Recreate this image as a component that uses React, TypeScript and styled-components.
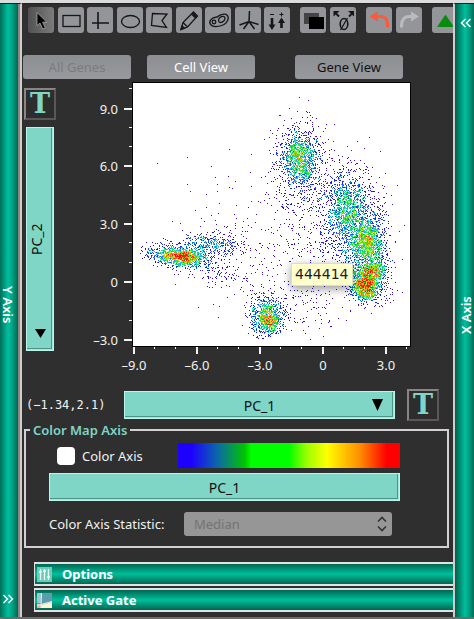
import React, { ReactNode } from "react";
import styled, { createGlobalStyle } from "styled-components";

const GlobalStyle = createGlobalStyle`
  * {
    box-sizing: border-box;
  }

  body {
    margin: 0;
    background: #2f2f2f;
    font-family: "Noto Sans", "Open Sans", sans-serif;
    font-size: 13px;
    color: #f2f2f2;
  }

  button,
  select {
    font-family: inherit;
    font-size: 13px;
    padding: 0;
    margin: 0;
  }
`;

const StyledWindow = styled.div`
  display: flex;
  min-height: 100vh;
  border-top: 3px solid #dcdcdc;
  border-bottom: 2px solid #6c6c6c;
  background: #2f2f2f;
`;

const StyledRail = styled.button<{ $side: "left" | "right" }>`
  flex: none;
  display: flex;
  flex-direction: ${({ $side }) =>
    $side === "left" ? "column" : "column-reverse"};
  align-items: center;
  width: ${({ $side }) => ($side === "left" ? "22px" : "21px")};
  padding: ${({ $side }) =>
    $side === "left" ? "12px 4px 13px 0" : "14px 0 14px 2px"};
  border: 0 solid #d2cccc;
  border-top: 1px solid #222;
  border-right-width: ${({ $side }) => ($side === "left" ? "2px" : "0")};
  border-left-width: ${({ $side }) => ($side === "left" ? "0" : "2px")};
  background: ${({ $side }) =>
    $side === "left"
      ? "linear-gradient(90deg, #006f59 0, #00826a 2px, #00bf9c 8px, #00a587 12px, #00654f 18px, #8b8585 18px)"
      : "linear-gradient(90deg, #00604e 0, #00bf9c 10px, #00a184 14px, #006a55 19px)"};
  color: #fff;
  cursor: pointer;
`;

const StyledRailLabel = styled.span<{ $up?: boolean }>`
  flex: 1;
  display: flex;
  align-items: center;
  justify-content: center;
  writing-mode: vertical-rl;
  transform: ${({ $up }) => ($up ? "rotate(180deg)" : "none")};
  font-size: 13px;
  font-weight: 600;
  line-height: 16px;
`;

const StyledMain = styled.main`
  flex: 1;
  min-width: 0;
  display: flex;
  flex-direction: column;
  border-top: 1px solid #222;
`;

const StyledToolbar = styled.div`
  display: flex;
  gap: 10px;
  height: 29px;
  padding: 3px 0 0 6px;
  overflow: hidden;
`;

const StyledToolGroup = styled.div<{ $width: number }>`
  flex: none;
  display: flex;
  justify-content: space-between;
  width: ${({ $width }) => $width}px;
`;

const StyledTool = styled.button<{ $active?: boolean }>`
  flex: none;
  width: 26px;
  height: 26px;
  border: 0;
  border-radius: 3px;
  background: ${({ $active }) =>
    $active ? "linear-gradient(90deg, #515151, #7c7c7c)" : "#949599"};

  svg {
    display: block;
  }
`;

const StyledViews = styled.div`
  display: flex;
  justify-content: space-between;
  gap: 16px;
  padding: 22px 50px 2px 1px;
`;

const StyledViewPair = styled.div`
  display: flex;
  gap: 16px;
`;

const StyledViewButton = styled.button<{ $color: string }>`
  width: 108px;
  height: 24px;
  border: 0;
  border-radius: 3px;
  background: linear-gradient(#8d8e92, #98999d);
  color: ${({ $color }) => $color};
`;

const StyledPlotRow = styled.div`
  display: flex;
`;

const StyledYColumn = styled.div`
  flex: none;
  display: flex;
  flex-direction: column;
  align-items: center;
  gap: 7px;
  width: 36px;
  padding-top: 7px;
`;

const StyledTextButton = styled.button`
  flex: none;
  width: 32px;
  height: 32px;
  border: 2px solid;
  border-color: #8a8484 #5c5757 #5c5757 #8a8484;
  background: #2d2d2d;
  color: #7fd6c7;
  font-family: "DejaVu Serif", serif;
  font-size: 27px;
  font-weight: 700;
  line-height: 26px;
`;

const StyledAxisPicker = styled.div<{ $vertical?: boolean }>`
  position: relative;
  flex: ${({ $vertical }) => ($vertical ? "none" : "1")};
  width: ${({ $vertical }) => ($vertical ? "28px" : "auto")};
  height: ${({ $vertical }) => ($vertical ? "224px" : "28px")};

  svg {
    position: absolute;
    right: ${({ $vertical }) => ($vertical ? "8px" : "12px")};
    bottom: ${({ $vertical }) => ($vertical ? "12px" : "8px")};
    pointer-events: none;
  }
`;

const StyledAxisSelect = styled.select<{ $vertical?: boolean }>`
  appearance: none;
  display: block;
  width: 100%;
  height: 100%;
  border: 1px solid #b9f7ea;
  border-radius: 0;
  outline: 0;
  background: #7fd6c7;
  box-shadow: ${({ $vertical }) =>
    $vertical
      ? "inset 1px 1px 0 #9fe9dc, inset 2px 2px 0 #4d9487"
      : "inset -1px -1px 0 #9fe9dc, inset -2px -2px 0 #4d9487"};
  color: #111;
  font-size: 14px;
  text-align: center;
  text-align-last: center;
  writing-mode: ${({ $vertical }) =>
    $vertical ? "vertical-rl" : "horizontal-tb"};
  transform: ${({ $vertical }) => ($vertical ? "rotate(180deg)" : "none")};
`;

const StyledPlot = styled.div`
  position: relative;
  flex: 1;
  min-width: 0;

  > svg {
    display: block;
    width: 100%;
    height: auto;
  }
`;

const StyledTooltip = styled.div`
  position: absolute;
  left: 59%;
  top: 62%;
  padding: 0 3px;
  border: 1px solid #e0e0b4;
  background: #ffffcb;
  box-shadow: 0 3px 10px rgba(0, 0, 0, 0.4);
  color: #1c1c1c;
  font-family: "DejaVu Sans", sans-serif;
  font-size: 14px;
  line-height: 21px;
`;

const StyledXRow = styled.div`
  display: flex;
  align-items: center;
  gap: 12px;
  padding: 14px 14px 0 4px;
`;

const StyledCoords = styled.output`
  flex: none;
  width: 86px;
  font-family: "DejaVu Sans Mono", monospace;
  font-size: 12px;
`;

const StyledFieldset = styled.fieldset`
  min-width: 0;
  margin: 0 4px 0 2px;
  padding: 4px 47px 10px 23px;
  border: 2px solid #d4d0d0;
`;

const StyledLegend = styled.legend`
  margin-left: -19px;
  padding: 0 3px;
  color: #7fd6c7;
  font-weight: 600;
  line-height: 18px;
`;

const StyledColorRow = styled.div`
  display: flex;
  align-items: center;
  justify-content: space-between;
  padding-left: 8px;
`;

const StyledCheckLabel = styled.label`
  display: flex;
  align-items: center;
  gap: 7px;
`;

const StyledCheckbox = styled.input`
  appearance: none;
  width: 18px;
  height: 18px;
  margin: 0;
  border-radius: 4px;
  background: #fff;
`;

const StyledSpectrum = styled.div`
  width: 222px;
  height: 25px;
  background: linear-gradient(
    90deg,
    #1e00ff 0,
    #1e00ff 6%,
    #0a6aa8 18%,
    #00c400 30%,
    #00ff00 33%,
    #00ff00 50%,
    #9cff00 58%,
    #ffff00 67%,
    #ff8c00 82%,
    #ff0000 94%
  );
`;

const StyledColorButton = styled.button`
  display: block;
  width: 100%;
  height: 28px;
  margin-top: 5px;
  border: 1px solid #b9f7ea;
  background: #7fd6c7;
  box-shadow: inset -1px -1px 0 #9fe9dc, inset -2px -2px 0 #4d9487;
  color: #111;
  font-size: 14px;
`;

const StyledStatistic = styled.div`
  display: flex;
  align-items: center;
  justify-content: space-between;
  padding: 11px 8px 0 0;
`;

const StyledSelectBox = styled.div`
  position: relative;

  svg {
    position: absolute;
    right: 4px;
    top: 4px;
    pointer-events: none;
  }
`;

const StyledSelect = styled.select`
  appearance: none;
  display: block;
  width: 208px;
  height: 24px;
  padding: 0 10px;
  border: 0;
  border-radius: 3px;
  background: #969696;
  color: #747474;
  opacity: 1;
`;

const StyledPanels = styled.div`
  display: flex;
  flex-direction: column;
  gap: 2px;
  padding: 14px 0 5px 12px;
`;

const StyledPanel = styled.button`
  display: flex;
  align-items: center;
  gap: 10px;
  height: 24px;
  padding-left: 2px;
  border: solid #e2e2e2;
  border-width: 2px 0 2px 1px;
  background: linear-gradient(#006752, #00be9b 50%, #006752);
  color: #fff;
  font-weight: 700;
  text-align: left;
`;

// Area of the white plot inside the chart drawing
const PLOT = { x: 75, y: 2, width: 277, height: 263 };

type Cluster = {
  x: number;
  y: number;
  sx: number;
  sy: number;
  tilt?: number;
  count: number;
};

const CLUSTERS: Cluster[] = [
  { x: 166, y: 75, sx: 8, sy: 12, count: 900 },
  { x: 167, y: 79, sx: 14, sy: 21, count: 620 },
  { x: 214, y: 128, sx: 11, sy: 19, count: 1050 },
  { x: 218, y: 140, sx: 16, sy: 28, count: 750 },
  { x: 235, y: 157, sx: 7, sy: 9, count: 600 },
  { x: 235, y: 165, sx: 10, sy: 20, count: 800 },
  { x: 239, y: 187, sx: 6, sy: 5, count: 480 },
  { x: 232, y: 203, sx: 6, sy: 6, count: 950 },
  { x: 234, y: 198, sx: 11, sy: 11, count: 550 },
  { x: 49, y: 173, sx: 9, sy: 3, tilt: 0.05, count: 540 },
  { x: 45, y: 173, sx: 15, sy: 5, tilt: 0.12, count: 1000 },
  { x: 78, y: 161, sx: 16, sy: 6, tilt: 0.05, count: 380 },
  { x: 84, y: 190, sx: 11, sy: 4, count: 60 },
  { x: 136, y: 238, sx: 5, sy: 5, count: 400 },
  { x: 134, y: 231, sx: 9, sy: 10, count: 680 },
  { x: 185, y: 102, sx: 20, sy: 20, count: 200 },
  { x: 190, y: 165, sx: 28, sy: 34, count: 300 },
  { x: 120, y: 165, sx: 38, sy: 34, count: 280 },
  { x: 180, y: 218, sx: 14, sy: 14, count: 70 },
];

// Low to high density
const COLORS = [
  "#2a10c8",
  "#2408e6",
  "#1a22f0",
  "#1040f0",
  "#0c78e8",
  "#10b8dc",
  "#10d8a0",
  "#10e060",
  "#28e828",
  "#60ea18",
  "#a0ea10",
  "#d8e010",
  "#f8c010",
  "#ff9010",
  "#ff5a10",
  "#ff2808",
  "#f81008",
];

const createRandom = (seed: number) => () => {
  seed = (seed * 1664525 + 1013904223) % 4294967296;
  return seed / 4294967296;
};

const buildDensityPaths = () => {
  const random = createRandom(4414);
  const { width, height } = PLOT;
  const counts = new Float32Array(width * height);

  CLUSTERS.forEach(({ x, y, sx, sy, tilt = 0, count }) => {
    for (let i = 0; i < count; i++) {
      const radius = Math.sqrt(-2 * Math.log(random() + 1e-9));
      const angle = random() * Math.PI * 2;
      const dx = radius * Math.cos(angle) * sx;
      const px = Math.round(x + dx);
      const py = Math.round(y + radius * Math.sin(angle) * sy + dx * tilt);
      if (px > 1 && px < width - 2 && py > 1 && py < height - 2) {
        counts[py * width + px] += 1;
      }
    }
  });

  const paths: Record<string, string> = {};
  for (let y = 2; y < height - 2; y++) {
    for (let x = 2; x < width - 2; x++) {
      if (!counts[y * width + x]) continue;
      let sum = 0;
      for (let j = -2; j <= 2; j++) {
        for (let i = -2; i <= 2; i++) {
          sum += counts[(y + j) * width + x + i];
        }
      }
      const density = (sum / 25) * (0.3 + 1.4 * random());
      const level = Math.max(0, Math.sqrt(density / 4.6) - 0.1) / 0.9;
      const color = COLORS[Math.round(Math.min(1, level) * 16)];
      paths[color] =
        (paths[color] || "") + `M${x + PLOT.x} ${y + PLOT.y}h1v1h-1z`;
    }
  }
  return Object.entries(paths);
};

const DENSITY_PATHS = buildDensityPaths();

const Y_TICKS = Array.from({ length: 14 }, (_, i) => 10 - i);
const X_TICKS = Array.from({ length: 14 }, (_, i) => i - 9);

const formatTick = (value: number) =>
  value === 0 ? "0" : value.toFixed(1).replace("-", "–");

const ScatterPlot = () => (
  <svg viewBox="0 0 395 294" role="img" aria-label="PC_1 against PC_2">
    <rect
      x={PLOT.x - 1}
      y={PLOT.y - 1}
      width={PLOT.width + 2}
      height={PLOT.height + 2}
      fill="#000"
    />
    <rect {...PLOT} fill="#fff" />
    <g shapeRendering="crispEdges">
      {DENSITY_PATHS.map(([color, d]) => (
        <path key={color} d={d} fill={color} />
      ))}
    </g>
    <g fill="#f2f2f2" fontSize="13" shapeRendering="crispEdges">
      {Y_TICKS.map((value) => {
        const major = value % 3 === 0;
        const y = Math.round(201 - value * 19.27);
        return (
          <g key={value}>
            <rect
              x={major ? 66 : 71}
              y={y - 1}
              width={major ? 8 : 3}
              height={major ? 2 : 1}
            />
            {major && (
              <text x="60" y={y + 5} textAnchor="end">
                {formatTick(value)}
              </text>
            )}
          </g>
        );
      })}
      {X_TICKS.map((value) => {
        const major = value % 3 === 0;
        const x = 265 + value * 21;
        return (
          <g key={value}>
            <rect
              x={x - 1}
              y="266"
              width={major ? 2 : 1}
              height={major ? 7 : 2}
            />
            {major && (
              <text x={x} y="289" textAnchor="middle">
                {formatTick(value)}
              </text>
            )}
          </g>
        );
      })}
    </g>
  </svg>
);

type ToolProps = {
  label: string;
  active?: boolean;
  children: ReactNode;
};

const Tool = ({ label, active, children }: ToolProps) => (
  <StyledTool type="button" aria-label={label} $active={active}>
    <svg
      width="26"
      height="26"
      viewBox="0 0 26 26"
      fill="none"
      stroke="#161616"
      strokeWidth="1.3"
    >
      {children}
    </svg>
  </StyledTool>
);

const Toolbar = () => (
  <StyledToolbar>
    <StyledToolGroup $width={262}>
      <Tool label="Select" active>
        <path
          d="M9 5.5v13.2l3-2.7 2.7 6 2.6-1.2-2.7-5.7h4.2z"
          fill="#000"
          stroke="#b8b8b8"
          strokeWidth="0.7"
        />
      </Tool>
      <Tool label="Rectangle">
        <rect x="5" y="8.5" width="17" height="11" />
      </Tool>
      <Tool label="Quadrants">
        <path d="M11 5v17M5 16h17" strokeWidth="1.6" />
      </Tool>
      <Tool label="Ellipse">
        <ellipse cx="13.5" cy="14.5" rx="9" ry="6" />
      </Tool>
      <Tool label="Polygon">
        <path d="M6.500 6.500 21 7l-5 6.500 4.500 7L5.500 18.500z" />
      </Tool>
      <Tool label="Pencil">
        <path d="M5 22.500 7 15.500 17.500 5l4 4L11.500 20zM7 15.500l4.500 4.500M15.500 7l4 4" />
        <path d="m16.500 6 4 4" strokeWidth="2" />
        <path d="m5 22.500 1-3.500 2.500 2z" fill="#161616" />
      </Tool>
      <Tool label="Autogate">
        <path d="M12 10c3-2.500 8-4 10.500-1.500 2 3-.5 8-4.500 9.500-4 1.500-10 2.500-12.500-.5-2-3 .5-7 6.500-7.500z" />
        <path d="M15 10.500c2-1.500 5-1.500 5 .500 0 2.500-2.500 4.500-4.500 4.500s-3-3-.500-5z" />
        <circle cx="9" cy="15" r="1.800" />
      </Tool>
      <Tool label="Spider">
        <path d="M14.500 4 14 14.500M4.500 18l9.500-3.500 9.500 3M14 14.500 8.500 22M14 14.500l5.500 7.500" strokeWidth="1.500" />
      </Tool>
      <Tool label="Sort">
        <path d="M8 11v8M17.500 21v-8" strokeWidth="2.600" />
        <path
          d="M4.500 17.500h7L8 23zM14 16h7l-3.500-5.500z"
          fill="#161616"
          stroke="none"
        />
        <path d="M6 7.500h4M15.500 7.500h4M17.500 5.500v4" strokeWidth="1" />
      </Tool>
    </StyledToolGroup>
    <StyledToolGroup $width={56}>
      <Tool label="Overlay">
        <rect x="4" y="6" width="15" height="11" fill="#444" stroke="none" />
        <rect x="9" y="10" width="15" height="12" fill="#000" stroke="none" />
      </Tool>
      <Tool label="Clear gates">
        <ellipse cx="14" cy="17" rx="3.800" ry="5.500" strokeWidth="1.600" />
        <path d="m10.500 23 7-12" strokeWidth="1.300" />
        <path d="M9 9.500 6 6.500M19 9.500l3-3" strokeWidth="1.800" />
        <path
          d="M3.500 4h6l-6 5.500zM24 4h-6l6 5.500z"
          fill="#161616"
          stroke="none"
        />
      </Tool>
    </StyledToolGroup>
    <StyledToolGroup $width={56}>
      <Tool label="Undo">
        <path d="M10 9.500h5c5 0 7 4 6.500 11" stroke="#fb5a3c" strokeWidth="3" />
        <path d="M3.500 9.500 12 4.500v10z" fill="#fb5a3c" stroke="none" />
      </Tool>
      <Tool label="Redo">
        <path d="M17 9.500h-4c-5 0-8 4-7.500 11" stroke="#bbb" strokeWidth="3" />
        <path d="M23 9.500 15 4.500v10z" fill="#bbb" stroke="none" />
      </Tool>
    </StyledToolGroup>
    <StyledToolGroup $width={26}>
      <Tool label="Parent gate">
        <path d="M5 20 13.500 7.500 22 20z" fill="#078c10" stroke="none" />
      </Tool>
    </StyledToolGroup>
  </StyledToolbar>
);

type AxisPickerProps = {
  label: string;
  value: string;
  vertical?: boolean;
};

const AxisPicker = ({ label, value, vertical }: AxisPickerProps) => (
  <StyledAxisPicker $vertical={vertical}>
    <StyledAxisSelect
      aria-label={label}
      defaultValue={value}
      $vertical={vertical}
    >
      <option>{value}</option>
    </StyledAxisSelect>
    <svg width="11" height="12" viewBox="0 0 11 12">
      <path d={vertical ? "M0 2h11L5.500 11z" : "M0 0h11L5.500 12z"} fill="#000" />
    </svg>
  </StyledAxisPicker>
);

const Chevrons = ({ left }: { left?: boolean }) => (
  <svg width="12" height="10" viewBox="0 0 12 10" fill="none" stroke="#fff">
    <path
      d={left ? "M5.500 1 1.500 5l4 4M10.500 1l-4 4 4 4" : "m1.500 1 4 4-4 4M6.500 1l4 4-4 4"}
      strokeWidth="1.400"
    />
  </svg>
);

const ColorMapAxis = () => (
  <StyledFieldset>
    <StyledLegend>Color Map Axis</StyledLegend>
    <StyledColorRow>
      <StyledCheckLabel>
        <StyledCheckbox type="checkbox" />
        Color Axis
      </StyledCheckLabel>
      <StyledSpectrum />
    </StyledColorRow>
    <StyledColorButton type="button">PC_1</StyledColorButton>
    <StyledStatistic>
      <label htmlFor="statistic">Color Axis Statistic:</label>
      <StyledSelectBox>
        <StyledSelect id="statistic" disabled defaultValue="Median">
          <option>Median</option>
        </StyledSelect>
        <svg width="12" height="16" viewBox="0 0 12 16" fill="none">
          <path
            d="m2 5.500 4-4 4 4M2 10.500l4 4 4-4"
            stroke="#333"
            strokeWidth="1.600"
          />
        </svg>
      </StyledSelectBox>
    </StyledStatistic>
  </StyledFieldset>
);

const OptionsIcon = () => (
  <svg width="15" height="15" viewBox="0 0 15 15">
    <rect width="15" height="15" fill="#6fcbb5" />
    <path
      d="M3.500 2v11M7.500 2v11M11.500 2v11M2 5h3M6 4h3M10 10h3"
      stroke="#e8fff8"
      strokeWidth="1.300"
    />
  </svg>
);

const GateIcon = () => (
  <svg width="15" height="15" viewBox="0 0 15 15">
    <rect width="15" height="15" fill="#5c9cab" />
    <path d="M0 0h4v10H0z" fill="#9cc6cf" />
    <path d="M4 12 15 9v6H4z" fill="#fff5d8" />
    <path d="M0 11h4v4H0z" fill="#efb0a4" />
    <path d="M4.500 0 4 15M0 12.500l15-4" stroke="#e8efec" />
  </svg>
);

const App = () => (
  <>
    <GlobalStyle />
    <StyledWindow>
      <StyledRail type="button" $side="left">
        <StyledRailLabel>Y Axis</StyledRailLabel>
        <Chevrons />
      </StyledRail>
      <StyledMain>
        <Toolbar />
        <StyledViews>
          <StyledViewPair>
            <StyledViewButton type="button" disabled $color="#7b7c80">
              All Genes
            </StyledViewButton>
            <StyledViewButton type="button" $color="#fff">
              Cell View
            </StyledViewButton>
          </StyledViewPair>
          <StyledViewButton type="button" $color="#111">
            Gene View
          </StyledViewButton>
        </StyledViews>
        <StyledPlotRow>
          <StyledYColumn>
            <StyledTextButton type="button">T</StyledTextButton>
            <AxisPicker label="Y Axis" value="PC_2" vertical />
          </StyledYColumn>
          <StyledPlot>
            <ScatterPlot />
            <StyledTooltip role="tooltip">444414</StyledTooltip>
          </StyledPlot>
        </StyledPlotRow>
        <StyledXRow>
          <StyledCoords>(−1.34,2.1)</StyledCoords>
          <AxisPicker label="X Axis" value="PC_1" />
          <StyledTextButton type="button">T</StyledTextButton>
        </StyledXRow>
        <ColorMapAxis />
        <StyledPanels>
          <StyledPanel type="button">
            <OptionsIcon />
            Options
          </StyledPanel>
          <StyledPanel type="button">
            <GateIcon />
            Active Gate
          </StyledPanel>
        </StyledPanels>
      </StyledMain>
      <StyledRail type="button" $side="right">
        <StyledRailLabel $up>X Axis</StyledRailLabel>
        <Chevrons left />
      </StyledRail>
    </StyledWindow>
  </>
);

export default App;
